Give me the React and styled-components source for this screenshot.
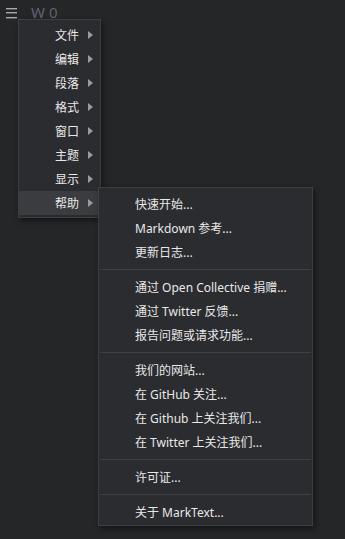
import React from "react";
import styled, { createGlobalStyle } from "styled-components";

const Global = createGlobalStyle`
  html, body { margin: 0; padding: 0; background: #252628; }
  body { font-family: "Noto Sans", "Noto Sans CJK SC", sans-serif; }
  #root { min-height: 539px; }
`;

const Page = styled.div`
  position: relative;
  width: 345px;
  height: 539px;
  background: #252628;
  overflow: hidden;
`;

const TitleBar = styled.div`
  display: flex;
  align-items: center;
  height: 26px;
  padding-left: 6px;
  gap: 13px;
`;

const Title = styled.span`
  font-family: "Noto Sans", sans-serif;
  font-size: 15px;
  letter-spacing: 4px;
  color: #5d6570;
  line-height: 1;
  margin-top: -1px;
`;

const Menu = styled.div`
  position: absolute;
  left: ${(p) => p.$left}px;
  top: ${(p) => p.$top}px;
  width: ${(p) => p.$width}px;
  box-sizing: border-box;
  background: #2b2c30;
  border: 1px solid #3d3e43;
  padding: ${(p) => p.$pad};
  box-shadow: 2px 3px 6px rgba(0, 0, 0, 0.45);
  font-family: "Noto Sans", "Noto Sans CJK SC", sans-serif;
  font-size: 12px;
  color: #e8e8e8;
`;

const TopRow = styled.div`
  display: flex;
  align-items: center;
  justify-content: flex-end;
  gap: 9px;
  height: 24px;
  padding-right: 7px;
  background: ${(p) => (p.$active ? "#3b3c40" : "transparent")};
`;

const Arrow = styled.span`
  width: 0;
  height: 0;
  border-top: 4px solid transparent;
  border-bottom: 4px solid transparent;
  border-left: 5px solid #9a9b9e;
`;

const SubRow = styled.div`
  display: flex;
  align-items: center;
  height: 24px;
  padding-left: 36px;
  white-space: nowrap;
`;

const Sep = styled.div`
  height: 1px;
  margin: 5px 1px;
  background: #404146;
`;

function Hamburger() {
  return (
    <svg width="12" height="11" viewBox="0 0 12 11">
      <rect x="0" y="0" width="11" height="1.4" fill="#a8a9ad" />
      <rect x="0" y="4" width="11" height="1.4" fill="#a8a9ad" />
      <rect x="0" y="9" width="11" height="1.4" fill="#a8a9ad" />
    </svg>
  );
}

const top = ["文件", "编辑", "段落", "格式", "窗口", "主题", "显示", "帮助"];

const groups = [
  ["快速开始...", "Markdown 参考...", "更新日志..."],
  ["通过 Open Collective 捐赠...", "通过 Twitter 反馈...", "报告问题或请求功能..."],
  ["我们的网站...", "在 GitHub 关注...", "在 Github 上关注我们...", "在 Twitter 上关注我们..."],
  ["许可证..."],
  ["关于 MarkText..."],
];

export default function App() {
  return (
    <Page>
      <Global />
      <TitleBar>
        <Hamburger />
        <Title>W0</Title>
      </TitleBar>
      <Menu $left={18} $top={19} $width={83} $pad="3px 0 2px">
        {top.map((t) => (
          <TopRow key={t} $active={t === "帮助"}>
            <span>{t}</span>
            <Arrow />
          </TopRow>
        ))}
      </Menu>
      <Menu $left={98} $top={187} $width={215} $pad="4px 0 1px">
        {groups.map((g, i) => (
          <React.Fragment key={i}>
            {i > 0 && <Sep />}
            {g.map((t) => (
              <SubRow key={t}>{t}</SubRow>
            ))}
          </React.Fragment>
        ))}
      </Menu>
    </Page>
  );
}
